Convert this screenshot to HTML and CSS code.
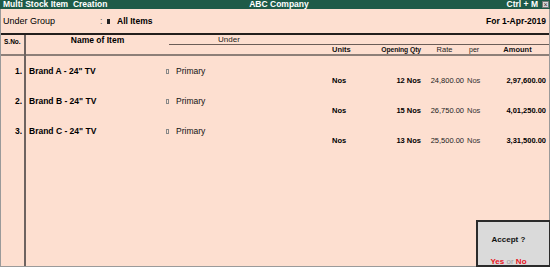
FILE: index.html
```html
<!DOCTYPE html>
<html>
<head>
<meta charset="utf-8">
<link rel="stylesheet" href="styles.css">
</head>
<body>
<div class="app">
  <div class="titlebar">
    <span class="t-left">Multi Stock Item &nbsp;Creation</span>
    <span class="t-mid">ABC Company</span>
    <span class="t-right">Ctrl + M <span class="close">×</span></span>
  </div>
  <div class="window">
    <div class="info">
      <div class="info-left">
        <span class="label">Under Group</span>
        <span class="colon">:</span>
        <span class="tofu dark"></span>
        <span class="value">All Items</span>
      </div>
      <div class="info-right">For 1-Apr-2019</div>
    </div>
    <div class="table">
      <div class="sno-col">
        <div class="sno-head">S.No.</div>
        <div class="sno-cell">1.</div>
        <div class="sno-cell">2.</div>
        <div class="sno-cell">3.</div>
      </div>
      <div class="main-col">
        <div class="head">
          <div class="h-name">Name of Item</div>
          <div class="h-under">
            <div class="under-title">Under</div>
            <div class="nums h-nums">
              <span></span>
              <span class="c-units b">Units</span>
              <span class="c-qty b cond">Opening Qty</span>
              <span class="c-rate center">Rate</span>
              <span class="c-per small">per</span>
              <span class="c-amt b center">Amount</span>
              <span></span>
            </div>
          </div>
        </div>
        <div class="row">
          <div class="row-top"><span class="name">Brand A - 24" TV</span><span class="under"><span class="tofu"></span>Primary</span></div>
          <div class="nums d-nums"><span></span><span class="c-units b">Nos</span><span class="c-qty b">12 Nos</span><span class="c-rate">24,800.00</span><span class="c-per">Nos</span><span class="c-amt b">2,97,600.00</span><span></span></div>
        </div>
        <div class="row">
          <div class="row-top"><span class="name">Brand B - 24" TV</span><span class="under"><span class="tofu"></span>Primary</span></div>
          <div class="nums d-nums"><span></span><span class="c-units b">Nos</span><span class="c-qty b">15 Nos</span><span class="c-rate">26,750.00</span><span class="c-per">Nos</span><span class="c-amt b">4,01,250.00</span><span></span></div>
        </div>
        <div class="row">
          <div class="row-top"><span class="name">Brand C - 24" TV</span><span class="under"><span class="tofu"></span>Primary</span></div>
          <div class="nums d-nums"><span></span><span class="c-units b">Nos</span><span class="c-qty b">13 Nos</span><span class="c-rate">25,500.00</span><span class="c-per">Nos</span><span class="c-amt b">3,31,500.00</span><span></span></div>
        </div>
      </div>
    </div>
    <div class="accept">
      <div class="accept-q">Accept ?</div>
      <div class="accept-a"><span class="red">Yes</span> <span class="or">or</span> <span class="red">No</span></div>
    </div>
  </div>
</div>
</body>
</html>
```

FILE: styles.css
```css
* { box-sizing: border-box; }
html, body { margin: 0; padding: 0; }
body {
  width: 550px;
  height: 267px;
  overflow: hidden;
  background: #fddfd0;
  font-family: "Liberation Sans", Arial, sans-serif;
  color: #000;
}
.app {
  height: 267px;
  display: flex;
  flex-direction: column;
}
.titlebar {
  height: 9px;
  background: #1e5b48;
  color: #fff;
  font-weight: bold;
  font-size: 8.5px;
  line-height: 9px;
  display: grid;
  grid-template-columns: 1fr auto 1fr;
  padding: 0 1px 0 3px;
  white-space: nowrap;
}
.t-mid { padding-left: 6px; }
.t-right { justify-self: end; display: flex; align-items: center; gap: 4px; }
.close {
  display: inline-block;
  width: 7px;
  height: 7px;
  background: #d8d8d8;
  border: 1px solid #777;
  color: #333;
  font-size: 7px;
  line-height: 5px;
  text-align: center;
  font-weight: normal;
}
.window {
  position: relative;
  flex: 1;
  display: flex;
  flex-direction: column;
  border-left: 1px solid #9a9a9a;
  border-right: 1px solid #9a9a9a;
  border-bottom: 1px solid #9a9a9a;
}
.info {
  height: 26px;
  display: flex;
  justify-content: space-between;
  align-items: center;
  padding: 0 3px 0 2px;
  border-bottom: 2px solid #231f1d;
  white-space: nowrap;
}
.info-left { display: flex; align-items: center; }
.label { font-size: 9px; width: 97px; }
.colon { font-size: 9px; color: #555; width: 7px; }
.value { font-size: 8.5px; font-weight: bold; margin-left: 7px; }
.info-right { font-size: 8.5px; font-weight: bold; }
.tofu {
  display: inline-block;
  width: 3px;
  height: 5px;
  border: 1px solid #888;
  background: transparent;
}
.tofu.dark { background: #222; border-color: #222; }
.table {
  flex: 1;
  display: flex;
}
.sno-col {
  width: 25px;
  border-right: 2px solid #6e6360;
}
.sno-head {
  height: 21px;
  border-bottom: 2px solid #8d7f78;
  font-size: 6.5px;
  font-weight: bold;
  padding: 3px 0 0 3px;
  line-height: 8px;
}
.sno-cell {
  height: 30px;
  padding: 10px 2px 0 0;
  text-align: right;
  font-size: 8.5px;
  font-weight: bold;
  line-height: 10px;
}
.main-col { flex: 1; }
.head {
  height: 21px;
  border-bottom: 2px solid #8d7f78;
  display: grid;
  grid-template-columns: 143px 1fr;
}
.h-name {
  font-size: 8.5px;
  font-weight: bold;
  text-align: center;
  line-height: 10px;
  padding-top: 0;
}
.h-under { display: flex; flex-direction: column; }
.under-title {
  height: 10px;
  border-bottom: 1px solid #6b5d57;
  font-size: 8px;
  line-height: 10px;
  padding-left: 49px;
  color: #222;
}
.nums {
  display: grid;
  grid-template-columns: 1fr 52px 41px 45px 22px 57px 3px;
  white-space: nowrap;
  line-height: 9px;
  height: 9px;
}
.h-nums { font-size: 7px; color: #111; }
.h-nums .b { font-size: 7.5px; }
.h-nums .c-units { padding-left: 3px; }
.h-nums .cond { font-size: 6.8px; letter-spacing: -0.1px; }
.h-nums .c-qty { text-align: right; padding-right: 1px; }
.h-nums .c-rate { font-size: 7.5px; color: #222; }
.h-nums .c-per { padding-left: 2px; color: #222; }
.center { text-align: center; }
.b { font-weight: bold; }
.row { height: 30px; padding-top: 10px; }
.row-top {
  height: 10px;
  line-height: 10px;
  display: grid;
  grid-template-columns: 140px 1fr;
}
.name { font-size: 8.5px; font-weight: bold; padding-left: 3px; white-space: nowrap; }
.under { font-size: 8.5px; display: flex; align-items: center; color: #111; }
.under .tofu { margin-right: 7px; }
.d-nums { font-size: 7.5px; height: 10px; line-height: 10px; }
.d-nums .c-units { padding-left: 3px; }
.d-nums .c-qty { text-align: right; padding-right: 1px; }
.d-nums .c-rate { text-align: right; padding-right: 3px; color: #222; }
.d-nums .c-per { color: #333; }
.d-nums .c-amt { text-align: right; }
.accept {
  position: absolute;
  right: -1px;
  bottom: -1px;
  width: 74px;
  height: 47px;
  background: #dadada;
  border: 2px solid #2b2b2b;
  border-right-width: 1px;
  display: flex;
  flex-direction: column;
  align-items: center;
  padding-right: 10px;
}
.accept-q {
  font-size: 8px;
  font-weight: bold;
  margin-top: 13px;
  color: #111;
}
.accept-a {
  font-size: 8px;
  font-weight: bold;
  margin-top: 13px;
}
.red { color: #e8141c; }
.or { color: #9a9a9a; font-weight: normal; }
```
